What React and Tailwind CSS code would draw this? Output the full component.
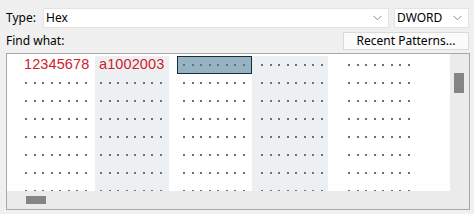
const ROWS = 8;

function Dots() {
  return (
    <div className="flex">
      {Array.from({ length: 8 }).map((_, i) => (
        <span key={i} className="flex w-[8.5px] h-[18px] items-center justify-center">
          <span className="block w-[2px] h-[2px] bg-[#6f6f6f]" />
        </span>
      ))}
    </div>
  );
}

function Chevron() {
  return (
    <svg width="9" height="6" viewBox="0 0 9 6" className="text-[#8a8a8a]">
      <path d="M0.5 0.8 L4.5 4.8 L8.5 0.8" fill="none" stroke="currentColor" strokeWidth="1" />
    </svg>
  );
}

function HexText({ children }) {
  return (
    <div className="h-[18px] flex items-center text-[14.5px] text-[#d0202e] tracking-[0.1px]" style={{ fontFamily: '"Liberation Sans", Arial, sans-serif' }}>
      {children}
    </div>
  );
}

export default function App() {
  const rows = Array.from({ length: ROWS });
  return (
    <div
      className="w-[474px] h-[214px] bg-[#f0f0f0] text-[12px] text-black overflow-hidden"
      style={{ fontFamily: '"Noto Sans", "Open Sans", sans-serif' }}
    >
      <div className="flex items-center pt-[8px] pl-[6px] pr-[5px] h-[28px]">
        <span className="w-[37px]">Type:</span>
        <div className="flex items-center justify-between w-[346px] h-[20px] bg-white border border-[#e3e3e3] pl-[2px] pr-[6px]">
          <span>Hex</span>
          <Chevron />
        </div>
        <div className="flex items-center justify-between ml-[5px] w-[75px] h-[20px] bg-white border border-[#e3e3e3] pl-[2px] pr-[6px]">
          <span>DWORD</span>
          <Chevron />
        </div>
      </div>
      <div className="flex items-center justify-between pl-[6px] pr-[5px] mt-[4px] h-[18px]">
        <span>Find what:</span>
        <div className="flex items-center justify-center w-[126px] h-[18px] bg-[#fbfbfb] border border-[#dadada]">
          Recent Patterns...
        </div>
      </div>
      <div className="mt-[3px] ml-[6px] w-[464px] h-[157px] border border-[#a8a8a8] flex flex-col">
        <div className="flex flex-1 min-h-0">
          <div className="flex-1 bg-white overflow-hidden pt-[2px] flex">
            <div className="w-[88px] pl-[15px]">
              <div className="pl-[2px]"><HexText>12345678</HexText></div>
              {rows.slice(1).map((_, i) => <Dots key={i} />)}
            </div>
            <div className="w-[74px] bg-[#edf0f2] pl-[2px]">
              <div className="pl-[2px]"><HexText>a1002003</HexText></div>
              {rows.slice(1).map((_, i) => <Dots key={i} />)}
            </div>
            <div className="w-[83px] pl-[8px]">
              <div className="w-[75px] h-[18px] bg-[#95b3c3] border border-[#1d2b33] pl-[2px] flex items-center">
                <Dots />
              </div>
              <div className="pl-[3px]">
                {rows.slice(1).map((_, i) => <Dots key={i} />)}
              </div>
            </div>
            <div className="w-[76px] bg-[#edf0f2] pl-[6px]">
              {rows.map((_, i) => <Dots key={i} />)}
            </div>
            <div className="flex-1 pl-[17px]">
              {rows.map((_, i) => <Dots key={i} />)}
            </div>
          </div>
          <div className="w-[19px] bg-[#ebebeb] pt-[19px] pl-[4px]">
            <div className="w-[10px] h-[20px] bg-[#858585]" />
          </div>
        </div>
        <div className="h-[18px] bg-[#ebebeb] pt-[5px] pl-[19px]">
          <div className="w-[20px] h-[8px] bg-[#858585]" />
        </div>
      </div>
    </div>
  );
}
